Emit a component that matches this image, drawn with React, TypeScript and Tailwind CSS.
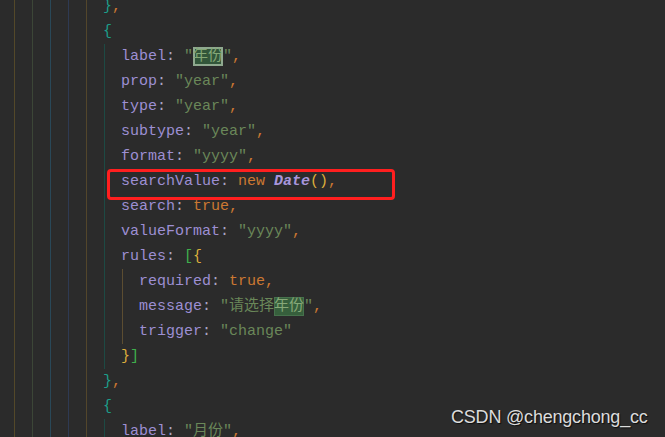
import React from "react";

type Tok = { t: string; c: string };

const GUIDE = [
  "border-[#534829]",
  "border-[#3c4637]",
  "border-[#294858]",
  "border-[#2e3a53]",
  "border-[#53462b]",
  "border-[#1d4a44]",
  "border-[#5c4d31]",
];

const K = "text-[#9d8fd3]";
const COL = "text-[#a9a7c4]";
const S = "text-[#6a8759]";
const O = "text-[#cc7832]";
const TEAL = "text-[#1c9f8a]";
const YEL = "text-[#dcae3c]";
const GRN = "text-[#3fae4c]";

const k = (t: string): Tok => ({ t, c: K });
const col = (): Tok => ({ t: ": ", c: COL });
const s = (t: string): Tok => ({ t, c: S });
const o = (t: string): Tok => ({ t, c: O });

const lines: { g: number; toks: Tok[] }[] = [
  { g: 5, toks: [{ t: "}", c: TEAL }, o(",")] },
  { g: 5, toks: [{ t: "{", c: TEAL }] },
  { g: 6, toks: [k("label"), col(), s('"'), { t: "年份", c: "hl1" }, s('"'), o(",")] },
  { g: 6, toks: [k("prop"), col(), s('"year"'), o(",")] },
  { g: 6, toks: [k("type"), col(), s('"year"'), o(",")] },
  { g: 6, toks: [k("subtype"), col(), s('"year"'), o(",")] },
  { g: 6, toks: [k("format"), col(), s('"yyyy"'), o(",")] },
  {
    g: 6,
    toks: [
      k("searchValue"),
      col(),
      o("new "),
      { t: "Date", c: "date" },
      { t: "()", c: YEL },
      o(","),
    ],
  },
  { g: 6, toks: [k("search"), col(), o("true,")] },
  { g: 6, toks: [k("valueFormat"), col(), s('"yyyy"'), o(",")] },
  { g: 6, toks: [k("rules"), col(), { t: "[", c: GRN }, { t: "{", c: YEL }] },
  { g: 7, toks: [k("required"), col(), o("true,")] },
  { g: 7, toks: [k("message"), col(), s('"请选择'), { t: "年份", c: "hl2" }, s('"'), o(",")] },
  { g: 7, toks: [k("trigger"), col(), s('"change"')] },
  { g: 6, toks: [{ t: "}", c: YEL }, { t: "]", c: GRN }] },
  { g: 5, toks: [{ t: "}", c: TEAL }, o(",")] },
  { g: 5, toks: [{ t: "{", c: TEAL }] },
  { g: 6, toks: [k("label"), col(), s('"月份"'), o(",")] },
];

function Token({ tok }: { tok: Tok }) {
  if (tok.c === "hl1")
    return (
      <span className="inline-block h-[19px] leading-[19px] bg-[#32563a] shadow-[inset_0_0_0_2px_#8fa98f] text-[#85a877]">
        {tok.t}
      </span>
    );
  if (tok.c === "hl2")
    return (
      <span className="inline-block h-[19px] leading-[19px] bg-[#365f3c] shadow-[inset_0_0_0_1px_#46714c] text-[#86a878]">
        {tok.t}
      </span>
    );
  if (tok.c === "date")
    return <span className="font-bold italic text-[#a896dc]">{tok.t}</span>;
  return <span className={tok.c}>{tok.t}</span>;
}

export default function App() {
  return (
    <div
      className="relative w-[665px] h-[437px] overflow-hidden bg-[#2b2b2b]"
      style={{ fontFamily: '"Liberation Mono", "Noto Sans CJK SC", monospace' }}
    >
      <div className="mt-[-6px] pl-[14px] text-[15px]">
        {lines.map((ln, i) => (
          <div key={i} className="flex h-[25px]">
            {Array.from({ length: ln.g }).map((_, j) => (
              <div key={j} className={`w-[18px] h-full shrink-0 border-l ${GUIDE[j]}`} />
            ))}
            <div className="ml-[-1px] leading-[25px] whitespace-pre">
              {ln.toks.map((tok, j) => (
                <Token key={j} tok={tok} />
              ))}
            </div>
          </div>
        ))}
      </div>

      <div className="absolute left-[107px] top-[169px] w-[288px] h-[31px] rounded-[4px] border-[3px] border-[#ff1f1f]" />

      <div
        className="absolute left-[451px] top-[407px] text-[18px] leading-[20px] tracking-[-0.2px] text-[#dcdcdc] [text-shadow:1px_1px_1px_rgba(0,0,0,0.7)]"
        style={{ fontFamily: '"Liberation Sans", Arial, sans-serif' }}
      >
        CSDN @chengchong_cc
      </div>
    </div>
  );
}
